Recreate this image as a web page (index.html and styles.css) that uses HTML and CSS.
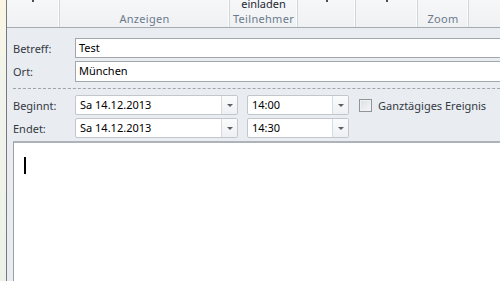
FILE: index.html
```html
<!DOCTYPE html>
<html lang="de">
<head>
  <meta charset="UTF-8" />
  <title>Test - Termin</title>
  <link rel="stylesheet" href="styles.css">
</head>
<body>
  <div class="window">
    <div class="frame"></div>
    <div class="main">
      <div class="ribbon">
        <div class="group g1"><span class="tick"></span></div>
        <div class="group g2"><span class="glabel">Anzeigen</span></div>
        <div class="group g3"><span class="gtop">einladen</span><span class="glabel">Teilnehmer</span></div>
        <div class="group g4"><span class="tick"></span></div>
        <div class="group g5"><span class="tick"></span></div>
        <div class="group g6"><span class="glabel">Zoom</span></div>
        <div class="group g7"></div>
      </div>

      <div class="form">
        <div class="row">
          <span class="label">Betreff:</span>
          <div class="field">Test</div>
        </div>
        <div class="row ort">
          <span class="label">Ort:</span>
          <div class="field">München</div>
        </div>
        <div class="sep"></div>
        <div class="row">
          <span class="label">Beginnt:</span>
          <div class="combo date"><span class="value">Sa 14.12.2013</span><span class="drop"></span></div>
          <div class="combo time"><span class="value">14:00</span><span class="drop"></span></div>
          <div class="check"><span class="box"></span>Ganztägiges Ereignis</div>
        </div>
        <div class="row">
          <span class="label">Endet:</span>
          <div class="combo date"><span class="value">Sa 14.12.2013</span><span class="drop"></span></div>
          <div class="combo time"><span class="value">14:30</span><span class="drop"></span></div>
        </div>
      </div>

      <div class="editor"><span class="caret"></span></div>
    </div>
  </div>
</body>
</html>
```

FILE: styles.css
```css
html, body {
  margin: 0;
  padding: 0;
  height: 100%;
  overflow: hidden;
}
body {
  font-family: 'Noto Sans', 'Open Sans', sans-serif;
  font-size: 11px;
  color: #1e1e1e;
  background: #e9ecf1;
}
.window {
  display: flex;
  width: 580px;
  height: 281px;
}
.frame {
  width: 6px;
  flex: none;
  background: linear-gradient(#fbf6e2, #f1f4ec 30%, #edf2e8);
  border-right: 1px solid #767a80;
}
.main {
  flex: 1;
  display: flex;
  flex-direction: column;
  min-width: 0;
}

/* ribbon */
.ribbon {
  display: flex;
  height: 27px;
  flex: none;
  background: linear-gradient(#f6f7f8, #eff1f3);
  border-bottom: 1px solid #a6abb2;
}
.group {
  display: flex;
  flex-direction: column;
  align-items: center;
  border-right: 1px solid #d2d6db;
  box-shadow: inset -1px 0 0 #fbfcfc;
}
.g1 { width: 52px; }
.g2 { width: 169px; }
.g3 { width: 67px; }
.g4 { width: 57px; }
.g5 { width: 61px; }
.g6 { width: 50px; }
.g7 { flex: 1; border-right: none; }
.tick {
  width: 2px;
  height: 2px;
  background: #4a4f55;
}
.glabel {
  margin-top: auto;
  margin-bottom: 1px;
  color: #6c7a8e;
  font-size: 11px;
  letter-spacing: 0.3px;
  line-height: 14px;
}
.gtop {
  color: #1d2733;
  line-height: 11px;
  margin-top: -2px;
  font-size: 11px;
}

/* header form */
.form {
  padding: 10px 0 3px 6px;
  display: flex;
  flex-direction: column;
  flex: none;
}
.row {
  display: flex;
  align-items: center;
  height: 20px;
  margin-bottom: 3px;
}
.row:last-child { margin-bottom: 0; }
.row.ort {
  height: 21px;
  margin-bottom: 0;
}
.label {
  width: 62px;
  flex: none;
  color: #343a42;
}
.field {
  flex: 1;
  height: 100%;
  box-sizing: border-box;
  border: 1px solid #a3a6ab;
  border-right: none;
  background: #fff;
  padding: 0 3px;
  line-height: 18px;
  color: #000;
}
.sep {
  margin: 6px 0 6px 0;
  border-top: 1px dashed #9ea4ad;
}
.combo {
  display: flex;
  height: 100%;
  box-sizing: border-box;
  border: 1px solid #c3c7cd;
  border-radius: 2px;
  background: #fff;
  color: #000;
}
.combo .value {
  flex: 1;
  padding-left: 4px;
  line-height: 18px;
}
.combo.date { width: 163px; }
.combo.time { width: 102px; margin-left: 9px; }
.drop {
  width: 15px;
  flex: none;
  border-left: 1px solid #d7dadf;
  background: linear-gradient(#fafbfc, #eef0f3);
  display: flex;
  align-items: center;
  justify-content: center;
}
.drop::after {
  content: "";
  border-left: 3px solid transparent;
  border-right: 3px solid transparent;
  border-top: 3px solid #5a5f66;
  margin-top: 1px;
}
.check {
  display: flex;
  align-items: center;
  margin-left: 10px;
  color: #343a42;
  white-space: nowrap;
}
.box {
  width: 11px;
  height: 11px;
  border: 1px solid #8f949b;
  background: linear-gradient(135deg, #dcdee1, #f7f7f8);
  box-shadow: inset 0 0 0 1px #f0f1f2;
  margin-right: 6px;
}

/* body / notes */
.editor {
  flex: 1;
  margin-left: 6px;
  background: #fff;
  border-top: 2px solid #aeb2b9;
  border-left: 1px solid #9aa0aa;
  padding: 14px 0 0 10px;
}
.caret {
  display: block;
  width: 2px;
  height: 17px;
  background: #000;
}
```
